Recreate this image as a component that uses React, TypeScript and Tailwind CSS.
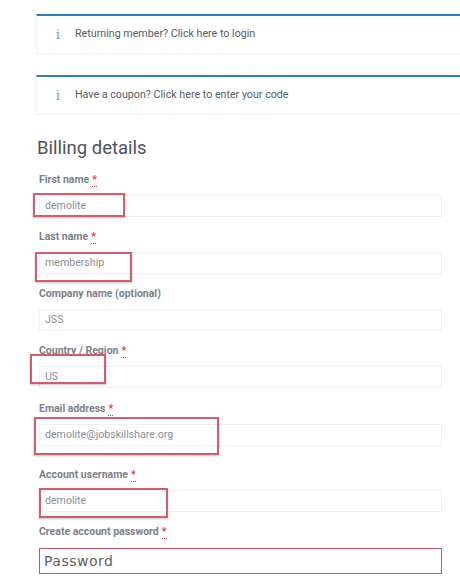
type Mark = { left: number; top: number; w: number; h: number };

type FieldProps = {
  label: string;
  value: string;
  required?: boolean;
  mark?: Mark;
  className?: string;
};

function Notice({ text }: { text: string }) {
  return (
    <div className="-mr-[10px] h-[40px] flex items-center border-t-2 border-t-[#2f7fc0] border-x border-b border-x-[#efefef] border-b-[#efefef] bg-white">
      <span className="ml-[19px] w-[19px] text-[12px] text-[#6b95bd] font-['DejaVu_Serif',serif] leading-none">
        i
      </span>
      <span className="text-[10.7px] text-[#555b63] leading-none">{text}</span>
    </div>
  );
}

function Field({ label, value, required = true, mark, className = "" }: FieldProps) {
  return (
    <div className={className}>
      <label className="block h-[16px] leading-[16px] text-[10.5px] font-bold text-[#7a7f8a]">
        {label}
        {required && (
          <abbr className="ml-[3px] text-[#e0364a] no-underline border-b border-dotted border-[#e0364a]">
            *
          </abbr>
        )}
      </label>
      <div className="relative mt-[7px]">
        <div className="h-[22px] w-[403px] border border-[#f0f0f0] flex items-center pl-[5px] text-[10.6px] text-[#8a8d92]">
          {value}
        </div>
        {mark && (
          <div
            className="absolute border-2 border-[#d45d6c] shadow-[0_1px_2px_rgba(0,0,0,0.25)]"
            style={{ left: mark.left, top: mark.top, width: mark.w, height: mark.h }}
          />
        )}
      </div>
    </div>
  );
}

export default function App() {
  return (
    <div className="w-[460px] h-[584px] overflow-hidden bg-white font-['Roboto',sans-serif]">
      <div className="pl-[36px] pt-[14px] flex flex-col gap-[21px]">
        <Notice text="Returning member? Click here to login" />
        <Notice text="Have a coupon? Click here to enter your code" />
      </div>

      <h3 className="ml-[37px] mt-[21px] h-[24px] leading-[24px] text-[18.5px] text-[#4a5263]">
        Billing details
      </h3>

      <div className="pl-[39px] mt-[12px]">
        <Field label="First name" value="demolite" mark={{ left: -6, top: -2, w: 92, h: 24 }} />
        <Field
          label="Last name"
          value="membership"
          className="mt-[12px]"
          mark={{ left: -4, top: 0, w: 97, h: 30 }}
        />
        <Field label="Company name (optional)" value="JSS" required={false} className="mt-[12px]" />
        <Field
          label="Country / Region"
          value="US"
          className="mt-[12px]"
          mark={{ left: -9, top: -12, w: 76, h: 30 }}
        />
        <Field
          label="Email address"
          value="demolite@jobskillshare.org"
          className="mt-[13px]"
          mark={{ left: -5, top: -7, w: 185, h: 38 }}
        />
        <Field
          label="Account username"
          value="demolite"
          className="mt-[21px]"
          mark={{ left: 0, top: -2, w: 129, h: 30 }}
        />

        <div className="mt-[12px]">
          <label className="block h-[16px] leading-[16px] text-[10.5px] font-bold text-[#7a7f8a]">
            Create account password
            <abbr className="ml-[3px] text-[#e0364a] no-underline border-b border-dotted border-[#e0364a]">
              *
            </abbr>
          </label>
          <div className="mt-[8px] h-[26px] w-[403px] border-[1.5px] border-[#c45867] flex items-center pl-[4px] text-[14px] tracking-[0.5px] text-[#5d6166] font-['DejaVu_Sans',sans-serif]">
            Password
          </div>
        </div>
      </div>
    </div>
  );
}
